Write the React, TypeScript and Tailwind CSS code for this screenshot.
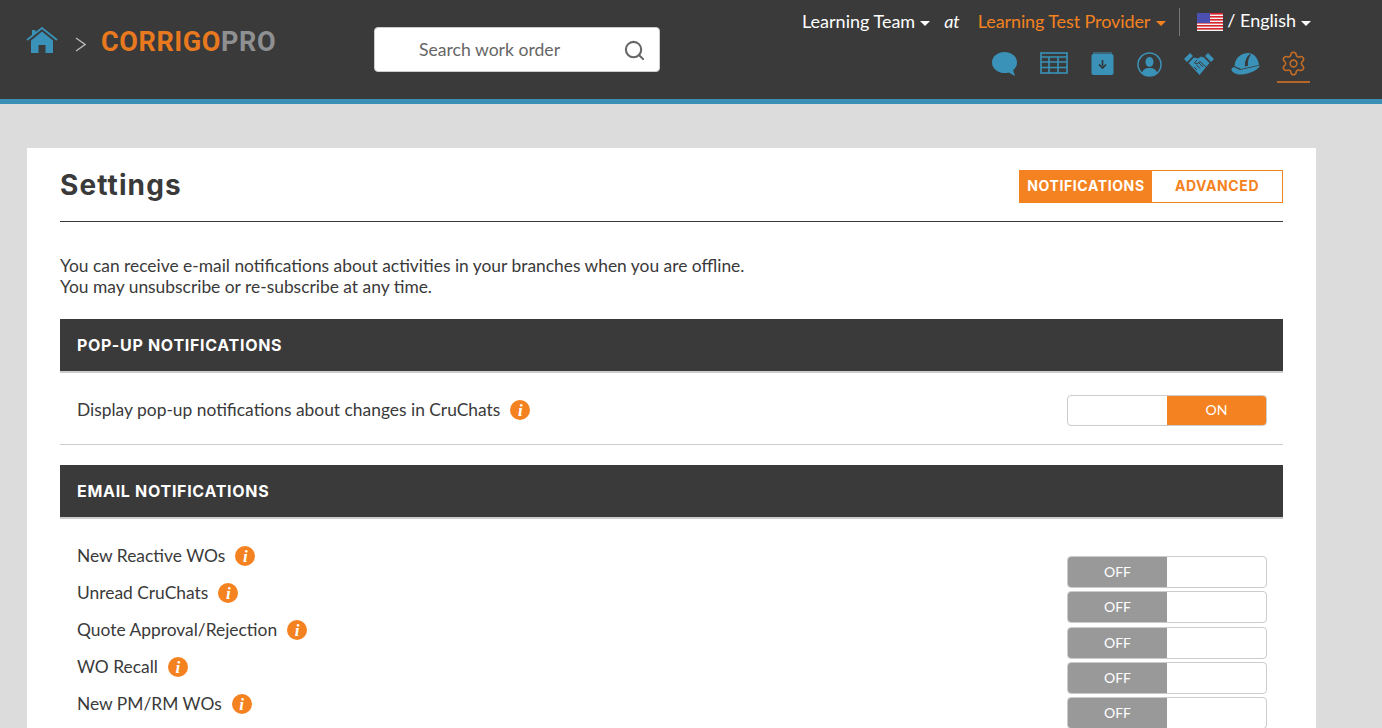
import { Search, Settings as Gear } from 'lucide-react';

const Caret = ({ className }: { className: string }) => (
  <span className={`inline-block w-0 h-0 border-x-[5px] border-x-transparent border-t-[5px] ${className}`} />
);

const Info = () => (
  <span className="flex items-center justify-center w-5 h-5 rounded-full bg-[#f58220] text-white text-[17px] leading-none font-bold italic font-['Liberation_Serif',serif]">
    i
  </span>
);

const Toggle = ({ on, className }: { on?: boolean; className: string }) => (
  <div className={`flex w-[200px] rounded-[4px] border border-[#ccc] overflow-hidden bg-white text-white text-sm ${className}`}>
    {on ? (
      <>
        <div className="w-[99px]" />
        <div className="flex-1 flex items-center justify-center bg-[#f58220]">ON</div>
      </>
    ) : (
      <>
        <div className="w-[99px] flex items-center justify-center bg-[#999]">OFF</div>
        <div className="flex-1" />
      </>
    )}
  </div>
);

const SectionHeader = ({ title }: { title: string }) => (
  <div className="h-[54px] flex items-center pl-[17px] bg-[#3a3a3a] border-b-2 border-[#ccc] text-white text-[16px] font-bold font-['Inter',sans-serif] tracking-[0.700px]">
    {title}
  </div>
);

const UsFlag = () => (
  <svg width="26" height="18" viewBox="0 0 26 18">
    <rect width="26" height="18" fill="#f4f4f4" />
    {[0, 3, 6, 9, 12, 15].map((y) => (
      <rect key={y} y={y} width="26" height="1.6" fill="#d8232a" />
    ))}
    <rect width="13" height="10" fill="#4a4fb0" />
  </svg>
);

const HomeIcon = () => (
  <svg width="32" height="26" viewBox="0 0 32 26" className="mr-[17px]">
    <path d="M1 13 L16 1 L31 13" fill="none" stroke="#3a92b8" strokeWidth="1.800" />
    <path d="M6 3h3.500v3.500L6 9z" fill="#3a92b8" />
    <path d="M5 13.500 L16 4.500 L27 13.500 V26 H19.500 V18 H12.500 V26 H5 Z" fill="#3a92b8" />
  </svg>
);

const Chevron = () => (
  <svg width="11" height="15" viewBox="0 0 11 15" className="mt-[10px] mr-[15px]">
    <path d="M1 1 L10 7.500 L1 14" fill="none" stroke="#b9b9b9" strokeWidth="1.400" />
  </svg>
);

const ChatIcon = () => (
  <svg width="25" height="24" viewBox="0 0 25 24" fill="#3a92b8">
    <ellipse cx="12.500" cy="10.500" rx="12.500" ry="10.500" />
    <path d="M14 19 L23 24 L20 15 Z" />
  </svg>
);

const TableIcon = () => (
  <svg width="28" height="22" viewBox="0 0 28 22" fill="none" stroke="#3a92b8" strokeWidth="1.600">
    <rect x="1" y="1" width="26" height="20" />
    <path d="M1 5h26M1 10h26M1 15.500h26M9 5v16M18 5v16" />
  </svg>
);

const ArchiveIcon = () => (
  <svg width="23" height="23" viewBox="0 0 23 23">
    <rect x="0.500" y="2" width="22" height="21" rx="2" fill="#3a92b8" />
    <path d="M2 1h19" stroke="#3a92b8" strokeWidth="1" />
    <path d="M11.500 8v6M8 12.500l3.500 3.500 3.500-3.500" stroke="#333" strokeWidth="1.600" fill="none" />
  </svg>
);

const UserIcon = () => (
  <svg width="25" height="25" viewBox="0 0 25 25">
    <circle cx="12.500" cy="12.500" r="11.500" fill="none" stroke="#3a92b8" strokeWidth="1.500" />
    <ellipse cx="12.500" cy="10" rx="4" ry="5" fill="#3a92b8" />
    <path d="M5 21c1-4 4-5 7.500-5s6.500 1 7.500 5a11 11 0 0 1-15 0z" fill="#3a92b8" />
  </svg>
);

const HandshakeIcon = () => (
  <svg width="30" height="24" viewBox="0 0 30 24">
    <path d="M0 7 L6 1 L9 4 L3 10 Z M30 7 L24 1 L21 4 L27 10 Z" fill="#3a92b8" />
    <path d="M4.500 11 L10 5.500 L14 6.500 L17 4.500 L20 5.500 L25.500 11 L15.500 23 Z" fill="#3a92b8" />
    <path d="M13 8 L10.500 11 L13 12 L16 9.500 L22 15 M10 15 L13 18 M12.500 13 L16 16.500 M15 11 L19 15" stroke="#3a3a3a" strokeWidth="1" fill="none" />
  </svg>
);

const HatIcon = () => (
  <svg width="29" height="23" viewBox="0 0 29 23">
    <path d="M3.500 14 C4 6 10 1 17 1 C23 1 27 6 28 13 L10 17 Z" fill="#3a92b8" />
    <path d="M0.500 17 C1 15.500 2.500 15 4 15.500 L9 18 L29 13.500 C27 18 19 22 10 22.500 C5 22.800 0 20 0.500 17 Z" fill="#3a92b8" />
    <path d="M14 14.500 C13.500 10 15 5 19 2 L20 2.200 C17.500 5.500 16.500 10 17 13.800 Z" fill="#3a3a3a" />
  </svg>
);

export default function App() {
  return (
    <div className="h-screen overflow-hidden bg-[#dcdcdc] font-['Lato',sans-serif] text-[#3a3a3a]">
      <header className="h-[104px] bg-[#3a3a3a] border-b-[5px] border-[#3a8fb7] flex">
        <div className="w-[374px] pl-[26px] pt-[27px] flex items-start">
          <HomeIcon />
          <Chevron />
          <span className="text-[27px] leading-[30px] font-bold font-['Roboto',sans-serif] tracking-[0.600px] text-[#e8791f]">
            CORRIGO<span className="text-[#8f9092]">PRO</span>
          </span>
        </div>
        <div className="mt-[27px] w-[286px] h-[45px] pt-px bg-white rounded-[4px] border border-[#ccc] flex items-center pl-[44px] pr-[13px] justify-between text-[#666] text-[17.600px]">
          <span>Search work order</span>
          <Search size={23} strokeWidth={2.200} />
        </div>
        <div className="flex-1 flex flex-col items-end pr-[71px]">
          <div className="flex items-center text-[18px] h-[37px] mt-[3px] text-white">
            <span>Learning Team</span>
            <Caret className="border-t-white ml-[5px] mt-[3px]" />
            <span className="italic ml-[14px]">at</span>
            <span className="text-[#f58220] ml-[18px] tracking-[-0.100px]">Learning Test Provider</span>
            <Caret className="border-t-[#f58220] ml-[6px] mt-[3px]" />
            <div className="w-px h-[28px] bg-[#777] ml-[13px] mr-[17px]" />
            <UsFlag />
            <span className="ml-[4px] -mt-[3px]">/ English</span>
            <Caret className="border-t-white ml-[5px] mt-[3px]" />
          </div>
          <div className="flex items-start mt-[12px] mr-px">
            <ChatIcon />
            <div className="ml-[23px]"><TableIcon /></div>
            <div className="ml-[23px]"><ArchiveIcon /></div>
            <div className="ml-[23px]"><UserIcon /></div>
            <div className="ml-[22px]"><HandshakeIcon /></div>
            <div className="ml-[17px]"><HatIcon /></div>
            <div className="ml-[17px] w-[33px] flex flex-col items-center -mt-[2px] pb-[4px] border-b-2 border-[#b5672a]">
              <Gear className="text-[#c26c27]" size={27} strokeWidth={1.400} />
            </div>
          </div>
        </div>
      </header>

      <main className="ml-[27px] mt-[44px] w-[1289px] min-h-[600px] bg-white px-[33px]">
        <div className="h-[74px] flex items-start justify-between border-b border-[#3a3a3a] pt-[22px]">
          <h1 className="text-[28px] leading-[30px] font-bold font-['Inter',sans-serif] tracking-[1.100px]">Settings</h1>
          <div className="flex h-[33px] border border-[#f58220] text-[14px] font-bold font-['Inter',sans-serif] tracking-[0.600px]">
            <div className="w-[132px] pb-[2px] bg-[#f58220] text-white flex items-center justify-center">NOTIFICATIONS</div>
            <div className="w-[130px] pb-[2px] text-[#f58220] flex items-center justify-center">ADVANCED</div>
          </div>
        </div>

        <p className="mt-[33px] mb-[22px] text-[17.400px] leading-[21px]">
          You can receive e-mail notifications about activities in your branches when you are offline.
          <br />
          You may unsubscribe or re-subscribe at any time.
        </p>

        <SectionHeader title="POP-UP NOTIFICATIONS" />
        <div className="h-[72px] flex items-center justify-between pl-[17px] pr-4 border-b border-[#ccc] text-[17.400px]">
          <div className="flex items-center gap-[10px] mt-[4px]">
            <span>Display pop-up notifications about changes in CruChats</span>
            <Info />
          </div>
          <Toggle on className="h-[31px] mt-[3px]" />
        </div>

        <div className="mt-5">
          <SectionHeader title="EMAIL NOTIFICATIONS" />
        </div>
        <div className="flex justify-between pl-[17px] pr-4 pt-[25px] text-[17.400px]">
          <ul className="flex flex-col gap-[13px]">
            {['New Reactive WOs', 'Unread CruChats', 'Quote Approval/Rejection', 'WO Recall', 'New PM/RM WOs'].map((label) => (
              <li key={label} className="flex items-center gap-[10px] h-6">
                <span>{label}</span>
                <Info />
              </li>
            ))}
          </ul>
          <div className="flex flex-col gap-[3.300px] pt-[12px]">
            {[0, 1, 2, 3, 4].map((i) => (
              <Toggle key={i} className="h-8" />
            ))}
          </div>
        </div>
      </main>
    </div>
  );
}
